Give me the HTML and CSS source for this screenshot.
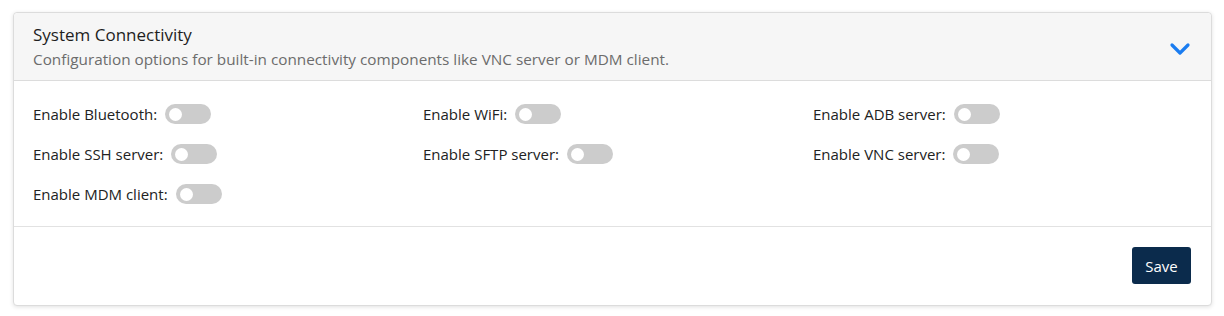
FILE: index.html
```html
<!DOCTYPE html>
<html lang="en">

<head>
    <meta charset="UTF-8">
    <meta name="viewport" content="width=device-width, initial-scale=1.0">
    <title>System Connectivity</title>
    <link rel="stylesheet" href="styles.css">
</head>

<body>
    <section class="card">
        <header class="card-header">
            <div class="header-text">
                <h2 class="card-title">System Connectivity</h2>
                <p class="card-desc">Configuration options for built-in connectivity components like VNC server or MDM client.</p>
            </div>
            <button class="collapse-btn" aria-label="Collapse">
                <svg width="22" height="14" viewBox="0 0 22 14">
                    <path d="M3 3 L11 11 L19 3" fill="none" stroke="currentColor" stroke-width="3.2" stroke-linecap="round" stroke-linejoin="round"/>
                </svg>
            </button>
        </header>

        <div class="card-body">
            <label class="option">Enable Bluetooth: <span class="switch"><span class="knob"></span></span></label>
            <label class="option">Enable WiFi: <span class="switch"><span class="knob"></span></span></label>
            <label class="option">Enable ADB server: <span class="switch"><span class="knob"></span></span></label>
            <label class="option">Enable SSH server: <span class="switch"><span class="knob"></span></span></label>
            <label class="option">Enable SFTP server: <span class="switch"><span class="knob"></span></span></label>
            <label class="option">Enable VNC server: <span class="switch"><span class="knob"></span></span></label>
            <label class="option">Enable MDM client: <span class="switch"><span class="knob"></span></span></label>
        </div>

        <footer class="card-footer">
            <button class="save-btn">Save</button>
        </footer>
    </section>
</body>

</html>
```

FILE: styles.css
```css
* {
    margin: 0;
    padding: 0;
    box-sizing: border-box;
}

body {
    font-family: 'Open Sans', 'Noto Sans', sans-serif;
    background-color: #ffffff;
    color: #212529;
    padding: 12px 12px 12px 13px;
}

.card {
    border: 1px solid #dcdcdc;
    border-radius: 4px;
    box-shadow: 0 1px 4px rgba(0, 0, 0, 0.12);
    background-color: #ffffff;
}

.card-header {
    display: flex;
    align-items: center;
    justify-content: space-between;
    background-color: #f6f6f6;
    border-bottom: 1px solid #dcdcdc;
    padding: 11px 20px 11px 19px;
    height: 68px;
    border-radius: 4px 4px 0 0;
}

.card-title {
    font-size: 17px;
    font-weight: 400;
    color: #1e1e1e;
    line-height: 22px;
}

.card-desc {
    font-size: 15.3px;
    color: #6c6c6c;
    line-height: 22px;
    margin-top: 2px;
}

.collapse-btn {
    background: none;
    border: none;
    color: #1a7cf0;
    cursor: pointer;
    display: flex;
    margin-top: 4px;
}

.card-body {
    display: grid;
    grid-template-columns: repeat(3, 1fr);
    column-gap: 12px;
    row-gap: 8px;
    padding: 17px 20px 16px 19px;
    border-bottom: 1px solid #e2e2e2;
}

.option {
    display: flex;
    align-items: center;
    gap: 8px;
    height: 32px;
    font-size: 15px;
    color: #222;
    cursor: pointer;
}

.switch {
    width: 46px;
    height: 20px;
    border-radius: 10px;
    background-color: #cccccc;
    display: flex;
    align-items: center;
    padding-left: 4px;
}

.knob {
    width: 13px;
    height: 13px;
    border-radius: 50%;
    background-color: #ffffff;
}

.card-footer {
    display: flex;
    justify-content: flex-end;
    padding: 20px 20px 21px;
}

.save-btn {
    background-color: #0b2b4c;
    color: #ffffff;
    border: none;
    border-radius: 3px;
    font-family: inherit;
    font-size: 15px;
    width: 59px;
    height: 37px;
    cursor: pointer;
}
```
